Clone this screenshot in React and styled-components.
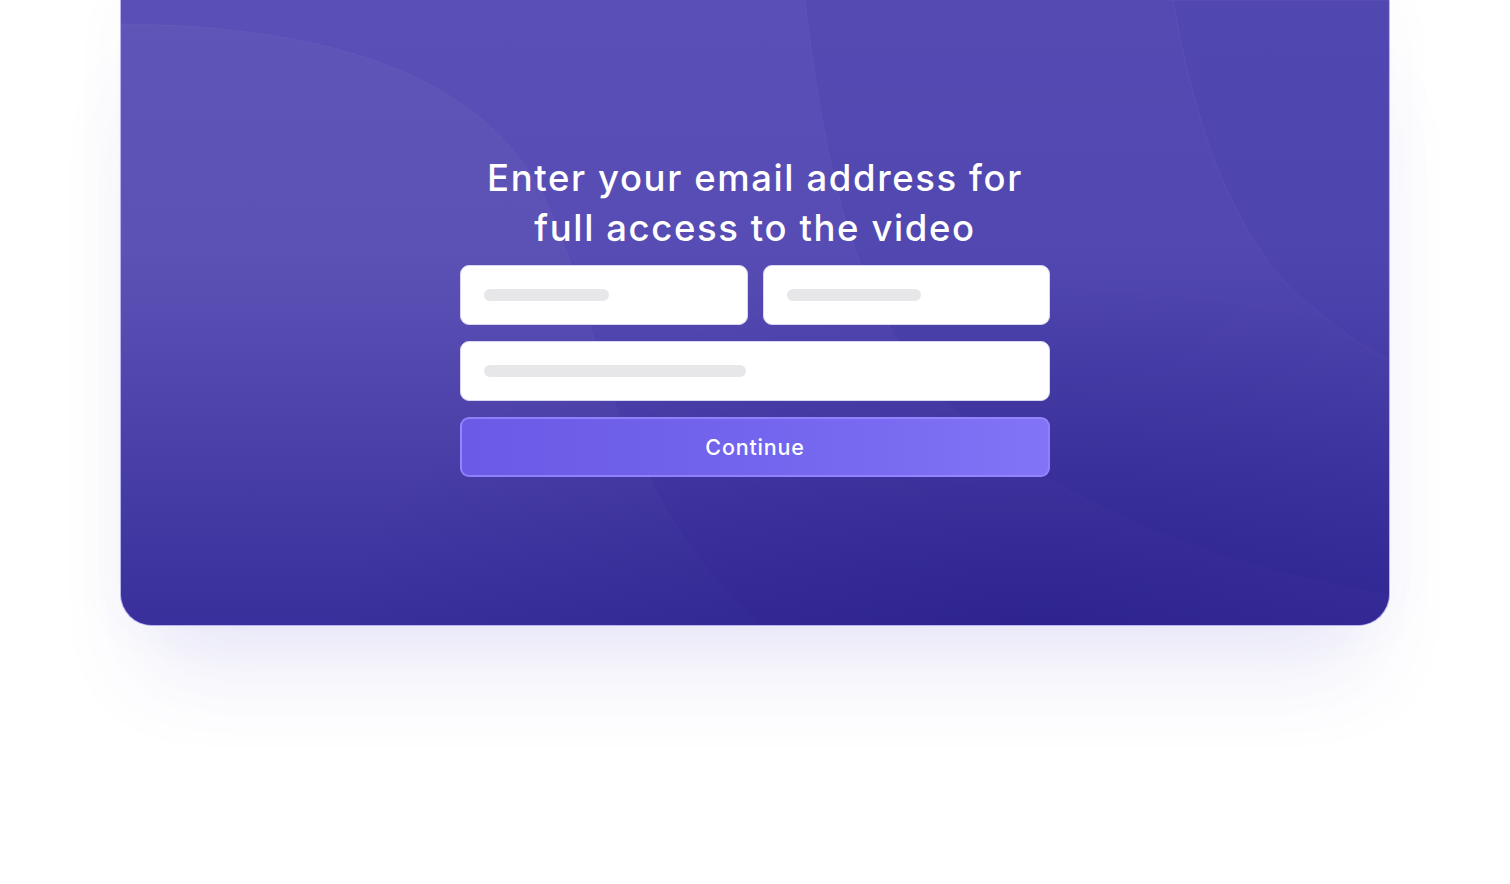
import React from 'react';
import styled, { createGlobalStyle } from 'styled-components';

const Global = createGlobalStyle`
  html, body {
    margin: 0;
    padding: 0;
    background: #ffffff;
  }
  body {
    font-family: Inter, "Noto Sans", sans-serif;
    -webkit-font-smoothing: antialiased;
  }
`;

const Page = styled.div`
  min-height: 100vh;
  padding: 0 120px;
  display: flex;
  flex-direction: column;
  align-items: stretch;
  box-sizing: border-box;
`;

const Card = styled.section`
  position: relative;
  height: 626px;
  box-sizing: border-box;
  overflow: hidden;
  border-radius: 0 0 32px 32px;
  border: 1px solid #b9b3ee;
  border-top: none;
  background: #5a4fb6;
  box-shadow: 0 70px 90px -30px rgba(88, 76, 200, 0.13), 0 0 60px rgba(88, 76, 200, 0.035);
  display: flex;
  justify-content: center;
  padding-top: 153px;
`;

const Backdrop = styled.svg`
  position: absolute;
  inset: 0;
  width: 100%;
  height: 100%;
`;

const Content = styled.div`
  position: relative;
  z-index: 1;
  width: 590px;
  display: flex;
  flex-direction: column;
  align-items: center;
`;

const Title = styled.h1`
  margin: 0 0 12px;
  font-family: Inter, "Noto Sans", sans-serif;
  font-weight: 500;
  font-size: 36.5px;
  line-height: 50px;
  letter-spacing: 1.6px;
  color: #ffffff;
  text-align: center;
  white-space: nowrap;
`;

const Form = styled.form`
  width: 100%;
  display: grid;
  grid-template-columns: 1fr 1fr;
  column-gap: 15px;
  row-gap: 16px;
`;

const Field = styled.div`
  grid-column: ${({ wide }) => (wide ? '1 / -1' : 'auto')};
  height: 60px;
  box-sizing: border-box;
  background: #ffffff;
  border: 1px solid #d9d6f2;
  border-radius: 9px;
  display: flex;
  align-items: center;
  padding-left: 23px;
`;

const Placeholder = styled.span`
  display: block;
  width: ${({ w }) => w}px;
  height: 12px;
  border-radius: 6px;
  background: #e7e7ea;
`;

const Button = styled.button`
  grid-column: 1 / -1;
  height: 60px;
  box-sizing: border-box;
  border-radius: 9px;
  border: 2px solid rgba(150, 138, 255, 0.8);
  background: linear-gradient(90deg, #6a5ae6 0%, #7466ee 55%, #8174f6 100%);
  color: #ffffff;
  font-family: Inter, "Noto Sans", sans-serif;
  font-weight: 500;
  font-size: 21.5px;
  letter-spacing: 0.8px;
  cursor: pointer;
`;

const Decor = () => (
  <Backdrop viewBox="0 0 1270 626" preserveAspectRatio="none">
    <defs>
      <linearGradient id="fade" x1="0" y1="0" x2="0" y2="1">
        <stop offset="0" stopColor="#22188a" stopOpacity="0" />
        <stop offset="0.4" stopColor="#22188a" stopOpacity="0.05" />
        <stop offset="1" stopColor="#22188a" stopOpacity="0.62" />
      </linearGradient>
      <radialGradient id="corner" cx="0.72" cy="1" r="0.55">
        <stop offset="0" stopColor="#1c1378" stopOpacity="0.35" />
        <stop offset="1" stopColor="#1c1378" stopOpacity="0" />
      </radialGradient>
    </defs>
    <path
      d="M0,24 C220,26 360,80 420,190 C470,290 480,400 530,480 C560,540 600,590 640,626 L0,626 Z"
      fill="#ffffff"
      fillOpacity="0.035"
      stroke="#ffffff"
      strokeOpacity="0.04"
    />
    <path
      d="M685,0 C700,120 720,260 790,360 C870,470 1050,560 1270,596 L1270,0 Z"
      fill="#3a2fa4"
      fillOpacity="0.16"
      stroke="#ffffff"
      strokeOpacity="0.04"
    />
    <path
      d="M1054,0 C1075,130 1120,250 1190,305 C1220,330 1245,348 1270,360 L1270,0 Z"
      fill="#3a2fa4"
      fillOpacity="0.12"
      stroke="#ffffff"
      strokeOpacity="0.05"
    />
    <rect x="0" y="0" width="1270" height="626" fill="url(#fade)" />
    <rect x="0" y="0" width="1270" height="626" fill="url(#corner)" />
  </Backdrop>
);

export default function App() {
  return (
    <>
      <Global />
      <Page>
        <Card>
          <Decor />
          <Content>
            <Title>
              Enter your email address for
              <br />
              full access to the video
            </Title>
            <Form onSubmit={(e) => e.preventDefault()}>
              <Field>
                <Placeholder w={125} />
              </Field>
              <Field>
                <Placeholder w={134} />
              </Field>
              <Field wide>
                <Placeholder w={262} />
              </Field>
              <Button type="submit">Continue</Button>
            </Form>
          </Content>
        </Card>
      </Page>
    </>
  );
}
